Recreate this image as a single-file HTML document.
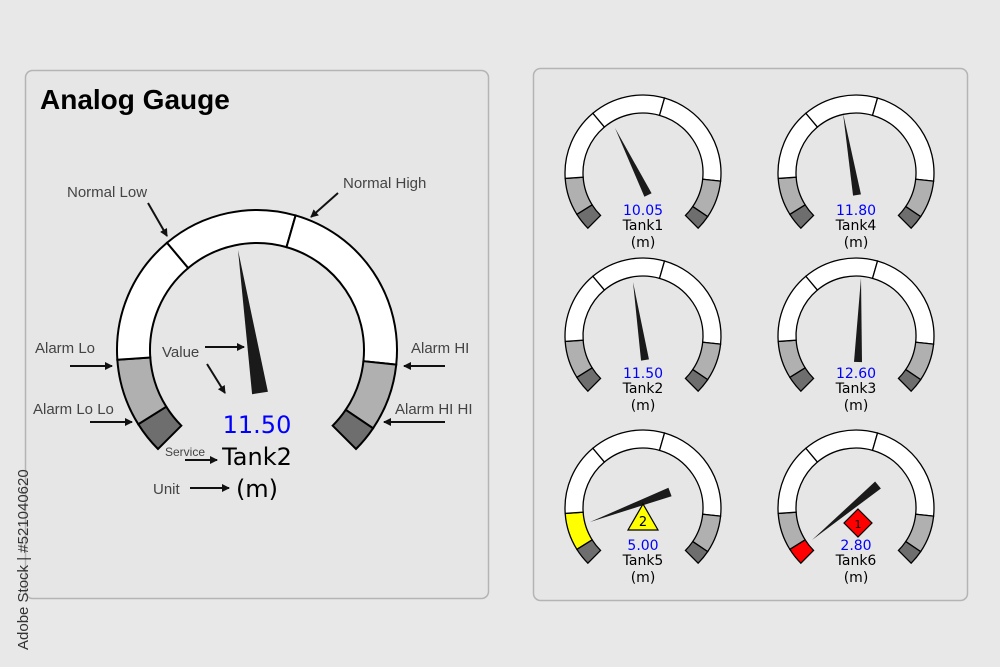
<!DOCTYPE html>
<html><head><meta charset="utf-8"><style>
html,body{margin:0;padding:0;background:#e8e8e8;}
svg{display:block;font-family:"DejaVu Sans","Liberation Sans",sans-serif;}
</style></head><body>
<svg id="s" width="1000" height="667" viewBox="0 0 1000 667" xmlns="http://www.w3.org/2000/svg">
<defs><marker id="ah" markerWidth="8" markerHeight="8" refX="7" refY="4" orient="auto" markerUnits="userSpaceOnUse"><path d="M0,0 L8,4 L0,8 z" fill="#111"/></marker></defs>
<rect x="0" y="0" width="1000" height="667" fill="#e8e8e8"/>
<rect x="25.5" y="70.5" width="463" height="528" rx="7" fill="#e6e6e6" stroke="#b4b4b4" stroke-width="1.5"/>
<rect x="533.5" y="68.5" width="434" height="532" rx="7" fill="#e6e6e6" stroke="#b4b4b4" stroke-width="1.5"/>
<text x="40" y="109" font-family="Liberation Sans,sans-serif" font-weight="bold" font-size="28" fill="#000">Analog Gauge</text>
<g id="g"></g>
<g font-family="Liberation Sans,sans-serif" font-size="15" fill="#444">
<text x="67" y="197">Normal Low</text>
<text x="343" y="188">Normal High</text>
<text x="35" y="353">Alarm Lo</text>
<text x="33" y="414">Alarm Lo Lo</text>
<text x="162" y="357">Value</text>
<text x="411" y="353">Alarm HI</text>
<text x="395" y="414">Alarm HI HI</text>
<text x="165" y="456" font-size="12">Service</text>
<text x="153" y="494">Unit</text>
</g>
<g stroke="#111" stroke-width="2" marker-end="url(#ah)">
<line x1="148" y1="203" x2="167" y2="236"/>
<line x1="338" y1="193" x2="311" y2="217"/>
<line x1="70" y1="366" x2="112" y2="366"/>
<line x1="90" y1="422" x2="132" y2="422"/>
<line x1="205" y1="347" x2="244" y2="347"/>
<line x1="207" y1="364" x2="225" y2="393"/>
<line x1="445" y1="366" x2="404" y2="366"/>
<line x1="445" y1="422" x2="384" y2="422"/>
<line x1="185" y1="460" x2="217" y2="460"/>
<line x1="190" y1="488" x2="229" y2="488"/>
</g>
<text transform="translate(28,650) rotate(-90)" font-family="Liberation Sans,sans-serif" font-size="15" fill="#333">Adobe Stock | #521040620</text>
</svg>
<script>
var g=document.getElementById('g'),NS='http://www.w3.org/2000/svg';
function el(t,a,txt){var e=document.createElementNS(NS,t);for(var k in a)e.setAttribute(k,a[k]);if(txt)e.textContent=txt;g.appendChild(e);return e;}
function P(cx,cy,r,t){t=t*Math.PI/180;return [cx+r*Math.sin(t),cy-r*Math.cos(t)];}
function seg(cx,cy,ro,ri,a,b,fill,sw){var p1=P(cx,cy,ro,a),p2=P(cx,cy,ro,b),p3=P(cx,cy,ri,b),p4=P(cx,cy,ri,a);var L=(b-a)>180?1:0;
el('path',{d:'M'+p1+' A'+ro+','+ro+' 0 '+L+' 1 '+p2+' L'+p3+' A'+ri+','+ri+' 0 '+L+' 0 '+p4+' Z',fill:fill,stroke:'#000','stroke-width':sw,'stroke-linejoin':'miter'});}
function needle(base,tip,w){var dx=tip[0]-base[0],dy=tip[1]-base[1],l=Math.hypot(dx,dy),nx=-dy/l*w/2,ny=dx/l*w/2;
el('polygon',{points:[tip,[base[0]+nx,base[1]+ny],[base[0]-nx,base[1]-ny]].join(' '),fill:'#1a1a1a'});}
function gauge(cx,cy,ro,ri,sw,cols,nb,nt,nw,val,name,fs,dy){
var b=[-135,-122,-94,-40,16,96,124,135];
for(var i=0;i<7;i++)seg(cx,cy,ro,ri,b[i],b[i+1],cols[i],sw);
needle(nb,nt,nw);
el('text',{x:cx,y:cy+dy[0],'text-anchor':'middle','font-size':fs[0],fill:'#0000ff'},val);
el('text',{x:cx,y:cy+dy[1],'text-anchor':'middle','font-size':fs[1],fill:'#000'},name);
el('text',{x:cx,y:cy+dy[2],'text-anchor':'middle','font-size':fs[1],fill:'#000'},'(m)');}
var C=['#6e6e6e','#b0b0b0','#fff','#fff','#fff','#b0b0b0','#6e6e6e'];
gauge(257,350,140,107,2,C,[260,393],[238,250],16,'11.50','Tank2',[24,24],[83,115,147],[1.5]);
var fs=[14,14],dy=[42,57,74];
gauge(643,173,78,60,1.3,C,[648,195],[615,128],8,'10.05','Tank1',fs,dy);
gauge(856,173,78,60,1.3,C,[857,195],[843,113],8,'11.80','Tank4',fs,dy);
gauge(643,336,78,60,1.3,C,[645,360],[633,282],8,'11.50','Tank2',fs,dy);
gauge(856,336,78,60,1.3,C,[858,362],[861,278],8,'12.60','Tank3',fs,dy);
gauge(643,508,78,60,1.3,['#6e6e6e','#ffff00','#fff','#fff','#fff','#b0b0b0','#6e6e6e'],[670,492],[590,522],9,'5.00','Tank5',fs,dy);
gauge(856,508,78,60,1.3,['#ff0000','#b0b0b0','#fff','#fff','#fff','#b0b0b0','#6e6e6e'],[878,485],[812,540],9,'2.80','Tank6',fs,dy);
el('polygon',{points:'643,504 628,530 658,530',fill:'#ffff00',stroke:'#000','stroke-width':1.2});
el('text',{x:643,y:526,'text-anchor':'middle','font-size':13,fill:'#000'},'2');
el('polygon',{points:'858,509 872,523 858,537 844,523',fill:'#ff0000',stroke:'#000','stroke-width':1.2});
el('text',{x:858,y:528,'text-anchor':'middle','font-size':11,fill:'#000'},'1');
</script>
</body></html>
